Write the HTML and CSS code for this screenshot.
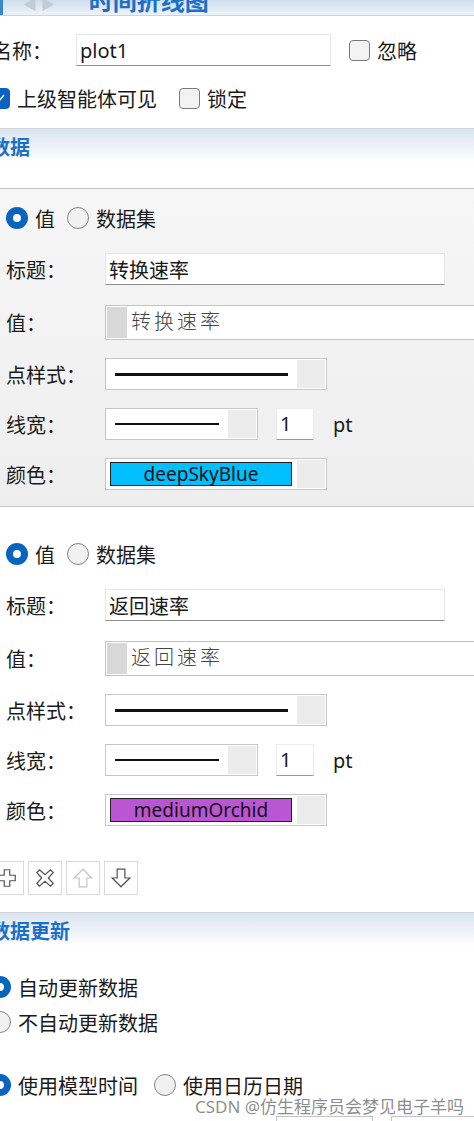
FILE: index.html
```html
<html>
	<head>
		<title>时间折线图</title>
		<meta charset="utf-8">
		<link rel="stylesheet" href="styles.css">
	</head>
	<body>
		<div class="page">
			<div class="titlebar">
				<span class="tb-mark"></span>
				<span class="tb-nav">◀ ▶</span>
				<span class="tb-title">时间折线图</span>
			</div>

			<div class="general">
				<div class="row">
					<span class="name-label">名称：</span>
					<span class="text-input name-input">plot1</span>
					<span class="check gap-l"></span><span class="check-text">忽略</span>
				</div>
				<div class="row row-2">
					<span class="check on"><svg viewBox="0 0 12 12" width="12" height="12"><path d="M2 6.5 L5 9 L10 3" fill="none" stroke="#fff" stroke-width="1.4"/></svg></span>
					<span class="check-text">上级智能体可见</span>
					<span class="check gap-l2"></span><span class="check-text">锁定</span>
				</div>
			</div>

			<div class="section-head">数据</div>

			<!-- first series (selected) -->
			<div class="item selected">
				<div class="radios">
					<span class="radio on"></span><span class="radio-text">值</span>
					<span class="radio"></span><span class="radio-text">数据集</span>
				</div>
				<div class="field field-title">
					<span class="field-label">标题：</span>
					<span class="text-input title-input">转换速率</span>
				</div>
				<div class="field field-value">
					<span class="field-label">值：</span>
					<span class="value-box"><span class="value-square"></span><span class="value-text">转换速率</span></span>
				</div>
				<div class="field">
					<span class="field-label">点样式：</span>
					<span class="combo wide"><span class="line thick"></span><span class="combo-btn"></span></span>
				</div>
				<div class="field">
					<span class="field-label">线宽：</span>
					<span class="combo narrow"><span class="line thin"></span><span class="combo-btn"></span></span>
					<span class="num-input">1</span>
					<span class="unit">pt</span>
				</div>
				<div class="field">
					<span class="field-label">颜色：</span>
					<span class="combo wide"><span class="swatch sky">deepSkyBlue</span><span class="combo-btn"></span></span>
				</div>
			</div>

			<!-- second series -->
			<div class="item second">
				<div class="radios">
					<span class="radio on"></span><span class="radio-text">值</span>
					<span class="radio"></span><span class="radio-text">数据集</span>
				</div>
				<div class="field field-title">
					<span class="field-label">标题：</span>
					<span class="text-input title-input">返回速率</span>
				</div>
				<div class="field field-value">
					<span class="field-label">值：</span>
					<span class="value-box"><span class="value-square"></span><span class="value-text">返回速率</span></span>
				</div>
				<div class="field">
					<span class="field-label">点样式：</span>
					<span class="combo wide"><span class="line thick"></span><span class="combo-btn"></span></span>
				</div>
				<div class="field">
					<span class="field-label">线宽：</span>
					<span class="combo narrow"><span class="line thin"></span><span class="combo-btn"></span></span>
					<span class="num-input">1</span>
					<span class="unit">pt</span>
				</div>
				<div class="field">
					<span class="field-label">颜色：</span>
					<span class="combo wide"><span class="swatch orchid">mediumOrchid</span><span class="combo-btn"></span></span>
				</div>
			</div>

			<div class="toolbar">
				<span class="tool"><svg viewBox="0 0 20 20" width="22" height="22"><path d="M7.5 2.5 H12.5 V7.5 H17.5 V12.5 H12.5 V17.5 H7.5 V12.5 H2.5 V7.5 H7.5 Z" fill="#fff" stroke="#555" stroke-width="1.1"/></svg></span>
				<span class="tool"><svg viewBox="0 0 20 20" width="22" height="22"><path d="M5 2.5 L10 7 L15 2.5 L17.5 5 L13 10 L17.5 15 L15 17.5 L10 13 L5 17.5 L2.5 15 L7 10 L2.5 5 Z" fill="#fff" stroke="#555" stroke-width="1.1"/></svg></span>
				<span class="tool disabled"><svg viewBox="0 0 20 20" width="22" height="22"><path d="M10 2 L18 10 H13.5 V18 H6.5 V10 H2 Z" fill="#fff" stroke="#c4c4c4" stroke-width="1.1"/></svg></span>
				<span class="tool"><svg viewBox="0 0 20 20" width="22" height="22"><path d="M6.5 2 H13.5 V10 H18 L10 18 L2 10 H6.5 Z" fill="#fff" stroke="#555" stroke-width="1.1"/></svg></span>
			</div>

			<div class="section-head">数据更新</div>

			<div class="update">
				<div class="opt"><span class="radio on"></span><span class="radio-text">自动更新数据</span></div>
				<div class="opt opt-2"><span class="radio"></span><span class="radio-text">不自动更新数据</span></div>
				<div class="opt opt-3">
					<span class="radio on"></span><span class="radio-text">使用模型时间</span>
					<span class="radio gap-r"></span><span class="radio-text">使用日历日期</span>
				</div>
				<div class="date-row">
					<span class="date-box"></span>
					<span class="date-box"></span>
				</div>
			</div>
		</div>
		<div class="watermark">CSDN @仿生程序员会梦见电子羊吗</div>
	</body>
</html>
```

FILE: styles.css
```css
body {
	margin: 0px;
	overflow: hidden;
	background: #fff;
	color: #1a1a1a;
	font-family: "Noto Sans", "Noto Sans CJK SC", sans-serif;
	font-size: 20px;
}

.page {
	margin-left: -12px;
	width: 500px;
}

/* top title bar, mostly scrolled out of view */
.titlebar {
	height: 15px;
	border-bottom: 1px solid #c9d3de;
	background: linear-gradient(#cfdeee, #eef3f8);
	display: flex;
	align-items: flex-end;
	overflow: hidden;
}

.tb-mark {
	width: 3px;
	height: 15px;
	margin-left: 12px;
	background: #3a86d0;
}

.tb-nav {
	margin-left: 20px;
	font-size: 14px;
	line-height: 14px;
	color: #c3ccd5;
	margin-bottom: 4px;
}

.tb-title {
	margin-left: 34px;
	font-family: "Noto Sans CJK SC", sans-serif;
	font-size: 24px;
	font-weight: bold;
	line-height: 24px;
	color: #1c6fc8;
	margin-bottom: 3px;
}

.general {
	padding: 18px 0px 18px 1px;
}

.row {
	display: flex;
	align-items: center;
	height: 32px;
}

.row-2 {
	height: 24px;
	margin-top: 20px;
}

.name-label {
	width: 84px;
	margin-left: 3px;
}

.text-input {
	box-sizing: border-box;
	height: 32px;
	background: #fff;
	border: 1px solid #e6e6e6;
	border-bottom-color: #8e8e8e;
	display: flex;
	align-items: center;
	padding-left: 3px;
}

.name-input {
	width: 255px;
}

.title-input {
	width: 340px;
}

.check {
	box-sizing: border-box;
	width: 21px;
	height: 21px;
	border: 1px solid #7a7a7a;
	border-radius: 4px;
	background: #f3f3f3;
	display: flex;
	align-items: center;
	justify-content: center;
}

.check.on {
	background: #0a62c2;
	border-color: #0a62c2;
}

.check-text {
	margin-left: 7px;
}

.gap-l {
	margin-left: 18px;
}

.gap-l2 {
	margin-left: 22px;
}

.section-head {
	border-top: 1px solid #d0d5db;
	height: 30px;
	padding: 3px 0px 0px 2px;
	line-height: 30px;
	background: linear-gradient(#dae4ef, #ffffff);
	color: #1c6fc8;
	font-family: "Noto Sans CJK SC", sans-serif;
	font-weight: bold;
}

.item {
	display: flex;
	flex-direction: column;
	padding: 17px 0px 16px 18px;
}

.item.selected {
	margin-top: 26px;
	border-top: 1px solid #c4c4c4;
	border-bottom: 1px solid #c4c4c4;
	background: linear-gradient(#f6f6f6, #eeeeee);
}

.item.second {
	padding-top: 35px;
	padding-bottom: 0px;
}

.radios {
	display: flex;
	align-items: center;
	height: 24px;
	margin-bottom: 5px;
}

.radio {
	box-sizing: border-box;
	width: 22px;
	height: 22px;
	border-radius: 50%;
	border: 1px solid #858585;
	background: #f1f1f1;
	flex: none;
}

.radio.on {
	border: 7px solid #0864be;
	background: #fff;
}

.radio-text {
	margin-left: 7px;
	margin-right: 12px;
}

.field {
	display: flex;
	align-items: center;
	margin-top: 18px;
}

.field-title {
	margin-top: 18px;
}

.field-value {
	margin-top: 20px;
}

.field-label {
	width: 99px;
	flex: none;
}

.value-box {
	box-sizing: border-box;
	width: 400px;
	height: 35px;
	border: 1px solid #c3c3c3;
	background: #fff;
	display: flex;
	align-items: stretch;
	flex: none;
}

.value-square {
	width: 20px;
	margin: 1px 0px 1px 1px;
	background: #d8d8d8;
}

.value-text {
	margin-left: 4px;
	line-height: 32px;
	color: #444;
	letter-spacing: 3px;
	font-weight: 300;
}

.combo {
	box-sizing: border-box;
	height: 32px;
	border: 1px solid #c6c6c6;
	background: #fff;
	display: flex;
	align-items: center;
	flex: none;
}

.combo.wide {
	width: 222px;
}

.combo.narrow {
	width: 153px;
}

.combo-btn {
	width: 28px;
	align-self: stretch;
	margin: 1px 1px 1px auto;
	background: #ececec;
}

.line {
	margin-left: 9px;
	background: #111;
}

.line.thick {
	width: 173px;
	height: 3px;
}

.line.thin {
	width: 104px;
	height: 2px;
}

.swatch {
	box-sizing: border-box;
	width: 182px;
	height: 24px;
	margin-left: 4px;
	border: 1px solid #222;
	text-align: center;
	font-size: 19px;
	line-height: 22px;
	color: #111;
}

.swatch.sky {
	background: #00bfff;
}

.swatch.orchid {
	background: #ba55d3;
}

.num-input {
	box-sizing: border-box;
	width: 38px;
	height: 32px;
	margin-left: 18px;
	padding-left: 3px;
	background: #fff;
	border: 1px solid #ececec;
	border-bottom-color: #9a9a9a;
	line-height: 30px;
}

.unit {
	margin-left: 19px;
}

.toolbar {
	display: flex;
	gap: 4px;
	margin: 35px 0px 17px 2px;
}

.tool {
	box-sizing: border-box;
	width: 34px;
	height: 34px;
	border: 1px solid #dadada;
	background: #fff;
	display: flex;
	align-items: center;
	justify-content: center;
}

.update {
	padding: 29px 0px 0px 1px;
}

.opt {
	display: flex;
	align-items: center;
	height: 24px;
}

.opt-2 {
	margin-top: 11px;
}

.opt-3 {
	margin-top: 39px;
}

.opt .radio-text {
	margin-right: 0px;
}

.gap-r {
	margin-left: 16px;
}

.date-row {
	display: flex;
	gap: 18px;
	margin: 19px 0px 0px 287px;
}

.date-box {
	width: 137px;
	height: 30px;
	border: 1px solid #c4c4c4;
}

.watermark {
	position: absolute;
	left: 195px;
	top: 1093px;
	font-family: "Noto Sans", "Noto Sans CJK SC", sans-serif;
	font-size: 17px;
	color: rgba(120, 120, 120, 0.85);
	white-space: nowrap;
}
```
